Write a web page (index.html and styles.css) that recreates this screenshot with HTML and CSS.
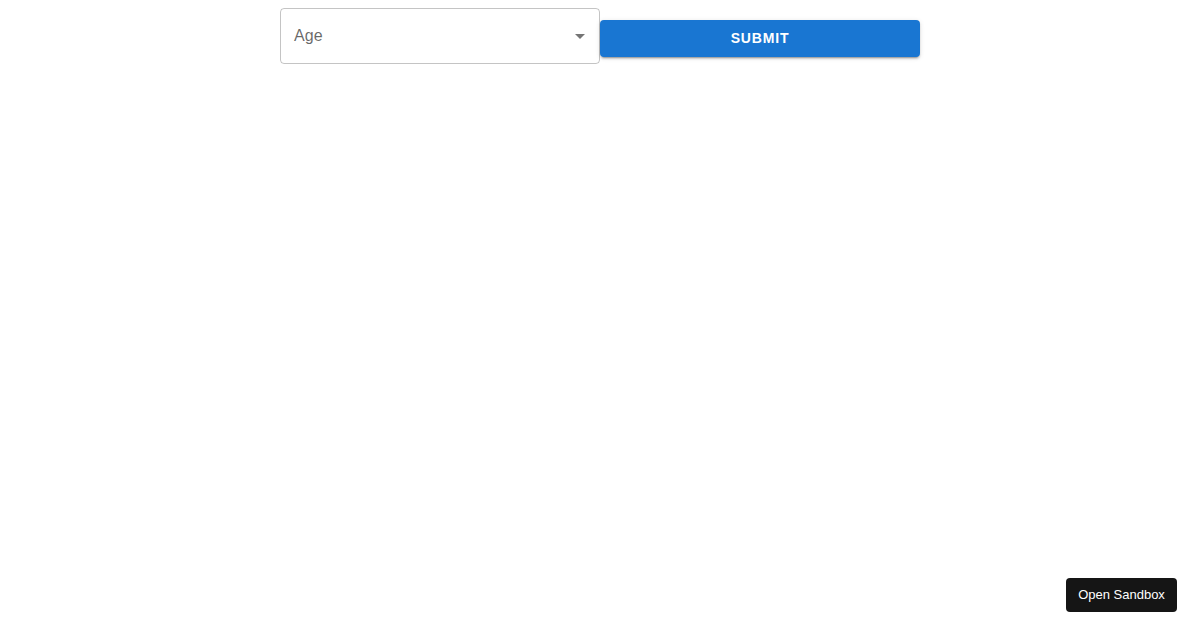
FILE: index.html
```html
<!DOCTYPE html>
<html lang="en">
<head>
  <meta charset="UTF-8" />
  <title>Age Select</title>
  <link rel="stylesheet" href="styles.css">
</head>
<body>
  <form class="age-form">
    <div class="select-field">
      <span class="select-label">Age</span>
      <svg class="select-icon" viewBox="0 0 24 24" width="24" height="24"><path d="M7 10l5 5 5-5z"></path></svg>
    </div>
    <button type="submit" class="submit-btn">Submit</button>
  </form>

  <a class="sandbox-btn">Open Sandbox</a>
</body>
</html>
```

FILE: styles.css
```css
* { box-sizing: border-box; }

body {
  margin: 0;
  padding-top: 8px;
  font-family: "Liberation Sans", Arial, sans-serif;
  background: #fff;
}

.age-form {
  display: flex;
  align-items: flex-start;
  width: 640px;
  margin: 0 auto;
}

.select-field {
  position: relative;
  display: flex;
  align-items: center;
  width: 320px;
  height: 56px;
  padding: 0 13px;
  border: 1px solid rgba(0, 0, 0, 0.23);
  border-radius: 4px;
}

.select-label {
  font-size: 16px;
  color: rgba(0, 0, 0, 0.6);
  letter-spacing: 0.00938em;
}

.select-icon {
  position: absolute;
  right: 7px;
  top: 15px;
  fill: rgba(0, 0, 0, 0.54);
}

.submit-btn {
  width: 320px;
  height: 37px;
  margin-top: 12px;
  padding: 0 0 2px;
  border: none;
  border-radius: 4px;
  background-color: #1976d2;
  color: #fff;
  font-family: "Liberation Sans", Arial, sans-serif;
  font-size: 14px;
  font-weight: 700;
  letter-spacing: 0.06em;
  text-transform: uppercase;
  cursor: pointer;
  box-shadow: 0 3px 1px -2px rgba(0, 0, 0, 0.2), 0 2px 2px 0 rgba(0, 0, 0, 0.14), 0 1px 5px 0 rgba(0, 0, 0, 0.12);
}

.sandbox-btn {
  position: fixed;
  right: 23px;
  bottom: 18px;
  width: 111px;
  height: 34px;
  padding-bottom: 2px;
  display: flex;
  align-items: center;
  justify-content: center;
  background: #151515;
  color: #fff;
  border-radius: 4px;
  font-family: "Liberation Sans", Arial, sans-serif;
  font-size: 13px;
}
```
